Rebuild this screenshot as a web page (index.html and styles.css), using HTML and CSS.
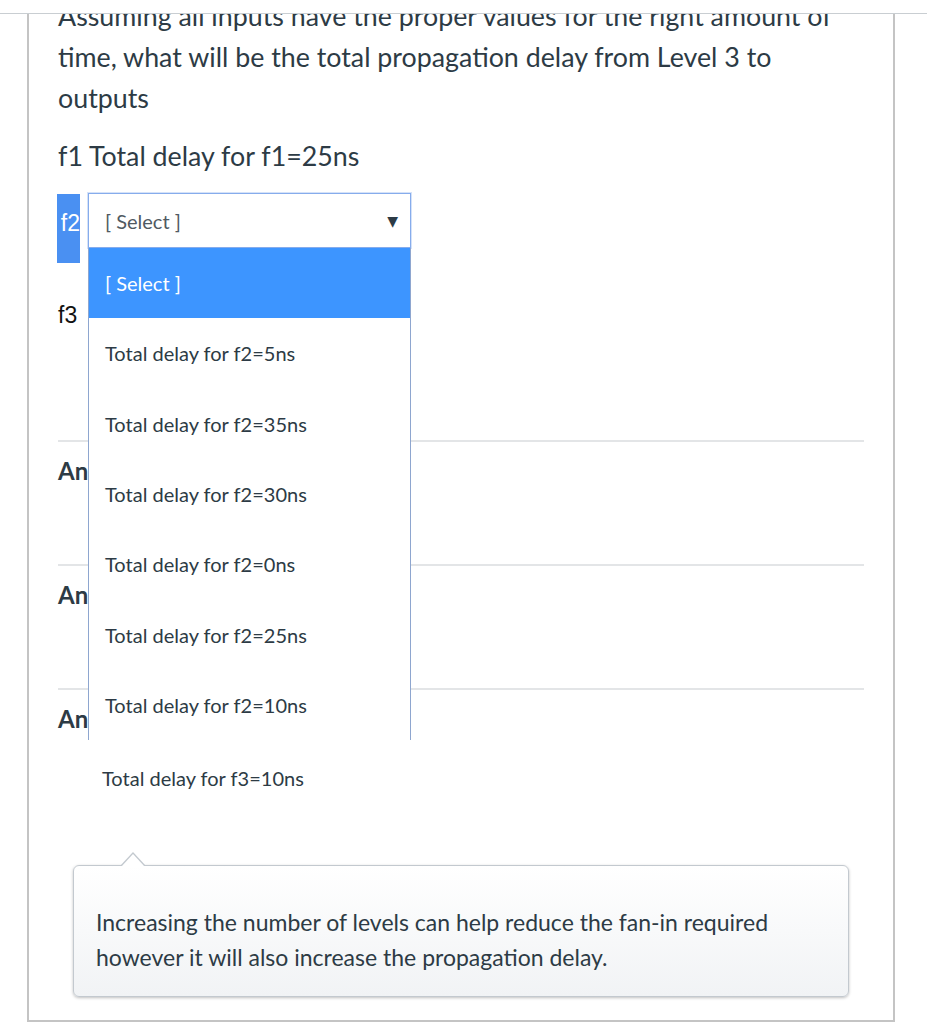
FILE: index.html
```html
<!DOCTYPE html>
<html>
<head>
<meta charset="utf-8">
<link rel="stylesheet" href="styles.css">
</head>
<body>
<div class="topbar"></div>
<div class="viewport">
  <div class="card">
    <p class="question">Assuming all inputs have the proper values for the right amount of time, what will be the total propagation delay from Level 3 to outputs</p>
    <p class="f1">f1 Total delay for f1=25ns</p>
    <div class="row f2row">
      <span class="sel-label">f2</span>
      <div class="select-wrap">
        <div class="select"><span class="select-text">[ Select ]</span><span class="caret">&#9660;</span></div>
        <ul class="dropdown">
          <li class="active">[ Select ]</li>
          <li>Total delay for f2=5ns</li>
          <li>Total delay for f2=35ns</li>
          <li>Total delay for f2=30ns</li>
          <li>Total delay for f2=0ns</li>
          <li>Total delay for f2=25ns</li>
          <li>Total delay for f2=10ns</li>
        </ul>
      </div>
    </div>
    <div class="row f3row"><span class="plain-label">f3</span></div>
    <div class="answers">
      <div class="answer">
        <div class="answer-title">Answer 1:</div>
        <div class="answer-value">Total delay for f1=25ns</div>
      </div>
      <div class="answer">
        <div class="answer-title">Answer 2:</div>
        <div class="answer-value">Total delay for f2=30ns</div>
      </div>
      <div class="answer">
        <div class="answer-title">Answer 3:</div>
        <div class="answer-value">Total delay for f3=10ns</div>
      </div>
    </div>
    <div class="comment">
      <p>Increasing the number of levels can help reduce the fan-in required however it will also increase the propagation delay.</p>
    </div>
  </div>
</div>
</body>
</html>
```
FILE: styles.css
```css
html, body {
  margin: 0;
  padding: 0;
  background: #fff;
}
body {
  font-family: Lato, "Noto Sans", sans-serif;
  color: #2d3b45;
  width: 927px;
  height: 1024px;
  overflow: hidden;
}
.topbar {
  height: 13px;
  border-bottom: 1px solid #c9ced2;
  background: #fff;
  width: 927px;
}
.viewport {
  height: 1010px;
  overflow: hidden;
}
.card {
  margin-top: -18px;
  margin-left: 27px;
  width: 806px;
  padding: 0 29px 23px 29px;
  border: 2px solid #c4c4c4;
  border-top: none;
  background: #fff;
}
.question {
  margin: 0;
  font-size: 26.8px;
  line-height: 41px;
}
.f1 {
  margin: 17px 0 0 0;
  font-size: 26.8px;
  line-height: 41px;
}
.row {
  display: flex;
  align-items: flex-start;
}
.f2row {
  margin-top: 17px;
  height: 69px;
}
.sel-label {
  display: block;
  width: 23px;
  height: 69px;
  margin-left: -1px;
  background: #4a90f2;
  color: #fff;
  font-family: "Liberation Sans", Arial, sans-serif;
  font-size: 23px;
  line-height: 58px;
  text-align: right;
  overflow: hidden;
}
.select-wrap {
  position: relative;
  margin-left: 8px;
  margin-top: -1px;
  z-index: 5;
}
.select {
  box-sizing: border-box;
  width: 323px;
  height: 55px;
  border: 1px solid #86acec;
  box-shadow: 0 0 0 1px rgba(134, 172, 236, 0.35);
  background: #fff;
  display: flex;
  align-items: center;
  justify-content: space-between;
  padding: 0 12px 0 16px;
}
.select-text {
  font-size: 20px;
  color: #505a62;
}
.caret {
  font-family: "DejaVu Sans", sans-serif;
  font-size: 14px;
  color: #2d3b45;
}
.dropdown {
  position: absolute;
  top: 55px;
  left: 0;
  box-sizing: border-box;
  width: 323px;
  height: 492px;
  margin: 0;
  padding: 0;
  list-style: none;
  background: #fff;
  border-left: 1px solid #8ea6cf;
  border-right: 1px solid #8ea6cf;
  overflow: hidden;
}
.dropdown li {
  height: 70.3px;
  display: flex;
  align-items: center;
  padding-left: 16px;
  font-size: 20px;
  color: #2d3b45;
}
.dropdown li.active {
  background: #3d95ff;
  color: #fff;
}
.f3row {
  margin-top: 25px;
  height: 55px;
  align-items: center;
}
.plain-label {
  font-family: "Liberation Sans", Arial, sans-serif;
  font-size: 23px;
  color: #111;
}
.answers {
  margin-top: 97px;
}
.answer {
  border-top: 2px solid #e3e5e7;
  padding-top: 14px;
  padding-bottom: 20px;
}
.answer:last-child {
  padding-bottom: 0;
}
.answer-title {
  font-size: 24px;
  font-weight: 700;
  line-height: 30px;
}
.answer-value {
  margin-top: 30px;
  margin-left: 44px;
  font-size: 20px;
  line-height: 28px;
}
.comment {
  position: relative;
  margin: 73px 15px 0 15px;
  border: 1px solid #c3c9cf;
  border-radius: 6px;
  background: linear-gradient(#ffffff, #f1f3f5);
  box-shadow: 0 1px 3px rgba(0, 0, 0, 0.25);
  padding: 39px 22px 21px 22px;
}
.comment::before {
  content: "";
  position: absolute;
  top: -14px;
  left: 46px;
  border-left: 13px solid transparent;
  border-right: 13px solid transparent;
  border-bottom: 14px solid #c3c9cf;
}
.comment::after {
  content: "";
  position: absolute;
  top: -12px;
  left: 47px;
  border-left: 12px solid transparent;
  border-right: 12px solid transparent;
  border-bottom: 13px solid #ffffff;
}
.comment p {
  margin: 0;
  font-size: 23px;
  line-height: 35px;
}
```
